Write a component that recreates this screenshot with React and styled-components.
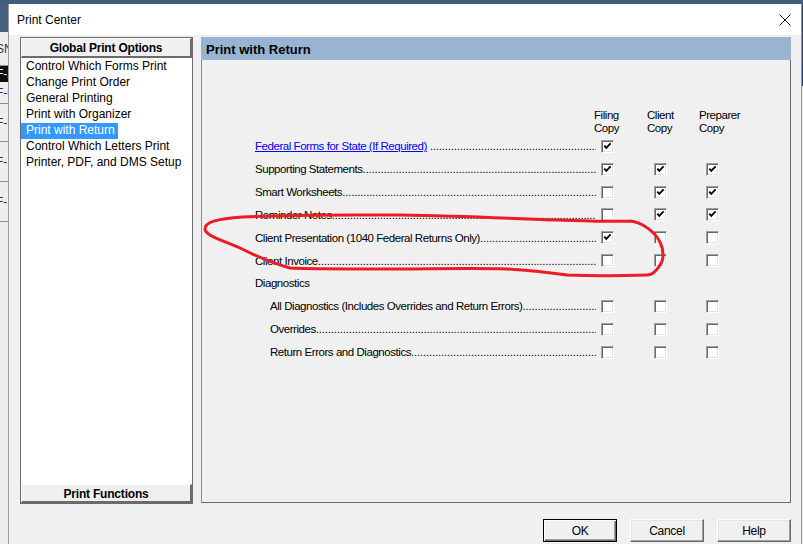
import styled, { createGlobalStyle } from "styled-components";

const GlobalStyle = createGlobalStyle`
  html, body {
    margin: 0;
    padding: 0;
    background: #3f5d7d;
  }
  * {
    box-sizing: border-box;
  }
`;

const sans = `"Liberation Sans", Arial, sans-serif`;

const Page = styled.div`
  position: relative;
  width: 803px;
  height: 544px;
  overflow: hidden;
  display: flex;
  flex-direction: column;
  background: #3f5d7d;
`;

const TopStrip = styled.div`
  height: 4px;
  flex-shrink: 0;
`;

const Main = styled.div`
  flex: 1;
  display: flex;
  min-height: 0;
`;

/* the spreadsheet behind the dialog */
const BackApp = styled.div`
  width: ${(p) => p.$w}px;
  flex-shrink: 0;
  display: flex;
  flex-direction: column;
`;

const BackCell = styled.div`
  height: ${(p) => p.$h}px;
  flex-shrink: 0;
  background: ${(p) => p.$bg || "#eeeeee"};
  border-bottom: ${(p) => (p.$line ? "1px solid #8c8c8c" : "none")};
  color: ${(p) => p.$color || "#333"};
  font: 12px ${sans};
  line-height: ${(p) => p.$h}px;
  overflow: hidden;
  white-space: nowrap;
  text-indent: -4px;
`;

const Dialog = styled.div`
  flex: 1;
  display: flex;
  flex-direction: column;
  background: #f0f0f0;
  border-left: 1px solid #9a9a9a;
  border-right: 1px solid #9a9a9a;
`;

const TitleBar = styled.div`
  height: 31px;
  flex-shrink: 0;
  background: #ffffff;
  display: flex;
  align-items: center;
  justify-content: space-between;
  padding: 0 10px 0 8px;
  font: 12px ${sans};
  color: #000;
`;

const CloseIcon = () => (
  <svg width="12" height="12" viewBox="0 0 12 12">
    <path d="M0.5 0.5 L11.5 11.5 M11.5 0.5 L0.5 11.5" stroke="#111" strokeWidth="1" />
  </svg>
);

const Body = styled.div`
  flex: 1;
  display: flex;
  flex-direction: column;
  padding: 2px 10px 0 11px;
`;

const Panels = styled.div`
  display: flex;
  gap: 8px;
  height: 467px;
  flex-shrink: 0;
`;

const SidePanel = styled.div`
  width: 173px;
  display: flex;
  flex-direction: column;
  border: 1px solid #6b6b6b;
  background: #ffffff;
`;

const PanelButton = styled.div`
  height: ${(p) => p.$h}px;
  flex-shrink: 0;
  background: #f0f0f0;
  border-top: 1px solid #ffffff;
  border-left: 1px solid #ffffff;
  border-right: 2px solid #6b6b6b;
  border-bottom: 2px solid #6b6b6b;
  display: flex;
  align-items: center;
  justify-content: center;
  padding-top: 1px;
  font: bold 12px ${sans};
  letter-spacing: -0.2px;
  color: #000;
`;

const NavList = styled.div`
  flex: 1;
  display: flex;
  flex-direction: column;
  align-items: flex-start;
  padding-top: 1px;
`;

const NavItem = styled.div`
  height: 16px;
  line-height: 16px;
  padding: 0 3px 0 5px;
  font: 12px ${sans};
  white-space: nowrap;
  background: ${(p) => (p.$active ? "#3399ff" : "transparent")};
  color: ${(p) => (p.$active ? "#ffffff" : "#000000")};
`;

const ContentPanel = styled.div`
  flex: 1;
  display: flex;
  flex-direction: column;
  border-left: 1px solid #8a8a8a;
  border-right: 1px solid #6b6b6b;
  border-bottom: 1px solid #6b6b6b;
  height: 466px;
`;

const ContentHeader = styled.div`
  height: 23px;
  flex-shrink: 0;
  margin: 0 -1px;
  background: #99b4d1;
  display: flex;
  align-items: center;
  padding-left: 5px;
  padding-top: 2px;
  font: bold 13px ${sans};
  color: #000;
`;

const Grid = styled.div`
  display: grid;
  grid-template-columns: 345px 53px 52px 1fr;
  grid-template-rows: 26px;
  grid-auto-rows: 22.85px;
  padding: 49px 0 0 53px;
  font: 11.5px ${sans};
  letter-spacing: -0.45px;
  color: #000;
`;

const ColHead = styled.div`
  margin-left: -6px;
  line-height: 13px;
  white-space: pre-line;
`;

const Label = styled.div`
  display: flex;
  align-items: center;
  padding-left: ${(p) => (p.$indent ? 15 : 0)}px;
  padding-right: 4px;
  white-space: nowrap;
  overflow: hidden;
`;

const LinkText = styled.span`
  color: #0000ff;
  text-decoration: underline;
  margin-right: 3px;
`;

const Leader = styled.span`
  flex: 1;
  overflow: hidden;
  white-space: nowrap;
  letter-spacing: -0.2px;
`;

const Cell = styled.div`
  display: flex;
  align-items: center;
  padding-left: 1px;
`;

const Box = styled.span`
  width: 13px;
  height: 13px;
  display: inline-flex;
  align-items: center;
  justify-content: center;
  background: #ffffff;
  border: 1px solid;
  border-color: #a0a0a0 #ffffff #ffffff #a0a0a0;
  box-shadow: inset 1px 1px #696969, inset -1px -1px #e3e3e3;
`;

const Check = ({ on }) => (
  <Box>
    {on && (
      <svg width="11" height="11" viewBox="0 0 11 11">
        <path d="M2.3 4.6 L4.3 6.8 L8.6 2.4" fill="none" stroke="#000" strokeWidth="1.9" />
      </svg>
    )}
  </Box>
);

const ButtonRow = styled.div`
  display: flex;
  justify-content: flex-end;
  gap: 13px;
  margin-top: 15px;
`;

const Button = styled.button`
  width: 74px;
  height: 23px;
  padding: 0;
  background: #f0f0f0;
  border: 1px solid;
  border-color: ${(p) => (p.$default ? "#000" : "#ffffff #696969 #696969 #ffffff")};
  box-shadow: ${(p) =>
    p.$default
      ? "inset 1px 1px #ffffff, inset -1px -1px #696969, inset -2px -2px #a0a0a0"
      : "inset -1px -1px #a0a0a0, inset 1px 1px #e3e3e3"};
  font: 12px ${sans};
  letter-spacing: -0.3px;
  color: #000;
`;

const Annotation = styled.svg`
  position: absolute;
  left: 0;
  top: 0;
  pointer-events: none;
`;

const DOTS = ".".repeat(160);

const rows = [
  { label: "Federal Forms for State (If Required)", link: true, boxes: [true] },
  { label: "Supporting Statements", boxes: [true, true, true] },
  { label: "Smart Worksheets", boxes: [false, true, true] },
  { label: "Reminder Notes", boxes: [false, true, true] },
  { label: "Client Presentation (1040 Federal Returns Only)", boxes: [true, false, false] },
  { label: "Client Invoice", boxes: [false, false, false] },
  { label: "Diagnostics", plain: true, boxes: [] },
  { label: "All Diagnostics (Includes Overrides and Return Errors)", indent: true, boxes: [false, false, false] },
  { label: "Overrides", indent: true, boxes: [false, false, false] },
  { label: "Return Errors and Diagnostics", indent: true, boxes: [false, false, false] },
];

const navItems = [
  "Control Which Forms Print",
  "Change Print Order",
  "General Printing",
  "Print with Organizer",
  "Print with Return",
  "Control Which Letters Print",
  "Printer, PDF, and DMS Setup",
];

export default function App() {
  return (
    <>
      <GlobalStyle />
      <Page>
        <TopStrip />
        <Main>
          <BackApp $w={8}>
            <BackCell $h={28} $bg="#44617f" />
            <BackCell $h={34} $line>SN</BackCell>
            <BackCell $h={16} $bg="#111" $color="#fff">F-2</BackCell>
            <BackCell $h={22} $line>F-6</BackCell>
            <BackCell $h={38} $line>F-5</BackCell>
            <BackCell $h={40} $line>F-1</BackCell>
            <BackCell $h={40} $line>F-1</BackCell>
            <BackCell $h={322} />
          </BackApp>
          <Dialog>
            <TitleBar>
              <span>Print Center</span>
              <CloseIcon />
            </TitleBar>
            <Body>
              <Panels>
                <SidePanel>
                  <PanelButton $h={20}>Global Print Options</PanelButton>
                  <NavList>
                    {navItems.map((item) => (
                      <NavItem key={item} $active={item === "Print with Return"}>
                        {item}
                      </NavItem>
                    ))}
                  </NavList>
                  <PanelButton $h={19}>Print Functions</PanelButton>
                </SidePanel>
                <ContentPanel>
                  <ContentHeader>Print with Return</ContentHeader>
                  <Grid>
                    <div />
                    <ColHead>{"Filing\nCopy"}</ColHead>
                    <ColHead>{"Client\nCopy"}</ColHead>
                    <ColHead>{"Preparer\nCopy"}</ColHead>
                    {rows.map((row) => (
                      <Row key={row.label} row={row} />
                    ))}
                  </Grid>
                </ContentPanel>
              </Panels>
              <ButtonRow>
                <Button $default>OK</Button>
                <Button>Cancel</Button>
                <Button>Help</Button>
              </ButtonRow>
            </Body>
          </Dialog>
          <BackApp $w={1}>
            <BackCell $h={60} $bg="#2a3f58" />
            <BackCell $h={22} $bg="#1d3a6a" />
            <BackCell $h={458} $bg="#e8e8e8" />
          </BackApp>
        </Main>
        <Annotation width="803" height="544" viewBox="0 0 803 544">
          <path
            d="M240 248 C225 241 205 236 205 229 C205 222 216 219 243 217 C300 214 360 215 400 215
               C470 216 520 219 557 220 C590 221 612 222 630 221 C642 222 655 232 660 242
               C664 250 664 260 660 265 C656 272 652 275 647 275 C620 276 590 276 567 275
               C545 272 525 270 507 269 C470 268 430 269 400 269 C340 269 305 269 290 268
               C275 264 260 258 240 248"
            fill="none"
            stroke="#ed1c24"
            strokeWidth="3"
            strokeLinecap="round"
          />
        </Annotation>
      </Page>
    </>
  );
}

function Row({ row }) {
  return (
    <>
      <Label $indent={row.indent}>
        {row.link ? <LinkText>{row.label}</LinkText> : <span>{row.label}</span>}
        {!row.plain && <Leader>{DOTS}</Leader>}
      </Label>
      {[0, 1, 2].map((i) => (
        <Cell key={i}>{row.boxes[i] !== undefined && <Check on={row.boxes[i]} />}</Cell>
      ))}
    </>
  );
}
